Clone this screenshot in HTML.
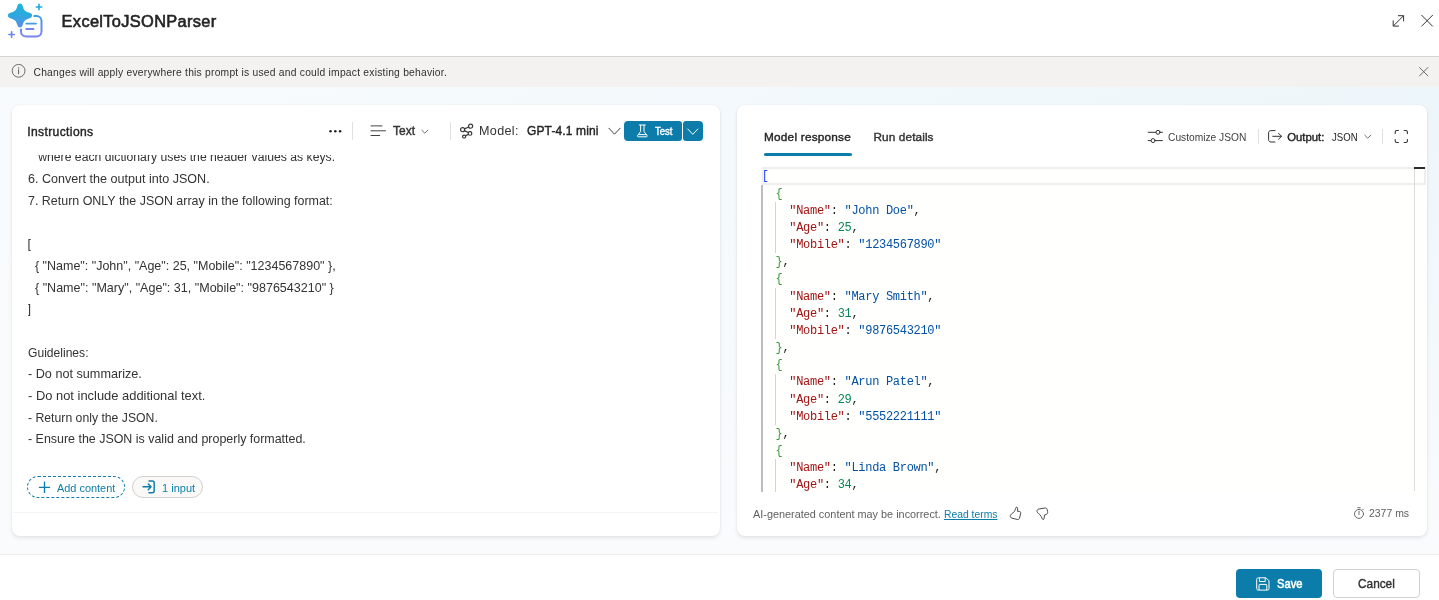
<!DOCTYPE html>
<html>
<head>
<meta charset="utf-8">
<title>ExcelToJSONParser</title>
<style>
*{box-sizing:border-box;margin:0;padding:0}
html,body{width:1439px;height:600px;overflow:hidden;background:#fff}
body{font-family:"Liberation Sans",sans-serif;color:#242424;position:relative;font-size:12.5px}
.abs{position:absolute}
.t{position:absolute;white-space:pre;line-height:1}
.b{font-weight:400;-webkit-text-stroke-width:0.4px;transform-origin:0 50%}
.t{transform-origin:0 50%}
/* header */
#hdr{position:absolute;left:0;top:0;width:1439px;height:57px;background:#fff;border-bottom:1px solid #d4d4d4}
#title{left:61.6px;top:13px;font-size:16.4px;letter-spacing:0.33px;font-weight:400;-webkit-text-stroke-width:0.6px;color:#242424}
/* info bar */
#info{position:absolute;left:0;top:57px;width:1439px;height:30px;background:#f3f2f1}
#infotxt{left:33.5px;top:67.9px;font-size:10.3px;letter-spacing:0.225px;color:#323130}
/* main */
#main{position:absolute;left:0;top:87px;width:1439px;height:467px;background:linear-gradient(180deg,rgba(249,250,252,0) 0%,rgba(250,251,253,.35) 40%,#fafbfd 100%),linear-gradient(90deg,#f8fbfd 0%,#f3f9fc 50%,#edf6fa 100%)}
#footline{position:absolute;left:0;top:554px;width:1439px;height:1px;background:#eeeeee}
.card{position:absolute;background:#fff;border-radius:8px;box-shadow:0 0 2px rgba(0,0,0,.05),0 2px 4px rgba(0,0,0,.09)}
#lcard{left:11.5px;top:105px;width:708px;height:430.5px}
#rcard{left:737px;top:105px;width:690px;height:430.5px}
.vdiv{position:absolute;width:1px;background:#e0e0e0}
.brand{color:#0c7dab}
/* left body */
#lbody{position:absolute;left:27.5px;top:155px;width:680px;height:310px;overflow:hidden}
#lbody .ln{position:absolute;left:0;white-space:pre;font-size:12.7px;line-height:21.7px;height:21.7px;color:#333;transform-origin:0 50%}
/* editor */
#ed{position:absolute;left:761px;top:167px;width:664.5px;height:324.5px;background:#fffffe;overflow:hidden}
#ed .ln{position:absolute;left:0.7px;margin-top:1.5px;white-space:pre;font-family:"Liberation Mono",monospace;font-size:12px;letter-spacing:-0.3px;line-height:17.17px;height:17.17px;color:#222}
.k{color:#a31515}.s{color:#0451a5}.n{color:#098658}.b1{color:#2047f7}.b2{color:#3d983d}
.g{position:absolute;width:1px;background:#d3d3d3}
.btn{position:absolute;border-radius:4px}
</style>
</head>
<body>
<div id="root" style="position:absolute;left:0;top:0;width:1439px;height:600px;will-change:transform">
<!-- HEADER -->
<div id="hdr"></div>
<svg class="abs" style="left:0;top:0" width="50" height="42" viewBox="0 0 50 42">
  <defs>
    <linearGradient id="gs" x1="0" y1="0" x2="0" y2="1"><stop offset="0" stop-color="#1fb4de"/><stop offset=".45" stop-color="#2aaade"/><stop offset="1" stop-color="#5b8bea"/></linearGradient>
    <linearGradient id="gd" x1="0" y1="0" x2="0" y2="1"><stop offset="0" stop-color="#3f9be8"/><stop offset="1" stop-color="#7b83f0"/></linearGradient>
  </defs>
  <!-- doc -->
  <rect x="21" y="16" width="20.5" height="20.5" rx="5" fill="none" stroke="url(#gd)" stroke-width="2"/>
  <path d="M26.3 23.6H36M26.3 29H33.5" stroke="url(#gd)" stroke-width="1.9" stroke-linecap="round" fill="none"/>
  <!-- star with white halo -->
  <path id="star" d="M20 3.4c1.6 0 2.3 1.2 2.8 3 .9 3.4 2.3 5 6.2 6.200 1.700.5 3.100 1.200 3.100 2.900s-1.400 2.400-3.100 2.900c-3.900 1.200-5.300 2.800-6.200 6.200-.5 1.800-1.200 3-2.800 3s-2.300-1.200-2.800-3c-.9-3.400-2.300-5-6.200-6.200-1.700-.5-3.100-1.200-3.100-2.900s1.400-2.400 3.100-2.900c3.900-1.200 5.300-2.800 6.200-6.200.5-1.800 1.200-3 2.800-3z" fill="url(#gs)" stroke="#fff" stroke-width="3" paint-order="stroke"/>
  <!-- plus signs -->
  <path d="M39 4.300v5.400M36.300 7h5.400" stroke="#1fa9e0" stroke-width="1.600" stroke-linecap="round"/>
  <path d="M11.600 31.800v5.400M8.900 34.500h5.400" stroke="#6a86ee" stroke-width="1.600" stroke-linecap="round"/>
</svg>
<div class="t" id="title">ExcelToJSONParser</div>
<!-- expand / close icons -->
<svg class="abs" style="left:1390px;top:12px" width="48" height="18" viewBox="0 0 48 18">
  <g fill="none" stroke="#333" stroke-width="1" stroke-linecap="round" stroke-linejoin="round">
    <path d="M3.500 13.800L13.300 4M8.300 3.700h5.300v5.300M3.200 8.800v5.300h5.300"/>
    <path d="M31.700 3.300l10.800 10.800M42.500 3.300L31.700 14.100"/>
  </g>
</svg>

<!-- INFO BAR -->
<div id="info"></div>
<svg class="abs" style="left:10px;top:62px" width="18" height="18" viewBox="0 0 18 18">
  <circle cx="8.600" cy="8.800" r="6.400" fill="none" stroke="#605e5c" stroke-width="0.900"/>
  <circle cx="8.600" cy="5.900" r="0.700" fill="#605e5c"/>
  <path d="M8.600 7.800v4" stroke="#605e5c" stroke-width="1" stroke-linecap="round"/>
</svg>
<div class="t" id="infotxt">Changes will apply everywhere this prompt is used and could impact existing behavior.</div>
<svg class="abs" style="left:1418px;top:65.700px" width="12" height="12" viewBox="0 0 12 12"><path d="M1.500 1.500l8.400 8.400M9.900 1.500L1.500 9.900" stroke="#605e5c" stroke-width="0.900" stroke-linecap="round"/></svg>

<!-- MAIN -->
<div id="main"></div>
<div id="footline"></div>
<div class="card" id="lcard"></div>
<div class="card" id="rcard"></div>

<!-- LEFT CARD TOOLBAR -->
<div class="t b" style="left:27.3px;top:125.600px;font-size:12.100px;letter-spacing:0.36px;color:#242424">Instructions</div>
<svg class="abs" style="left:328px;top:128px" width="16" height="6" viewBox="0 0 16 6"><g fill="#242424"><circle cx="2.500" cy="3.200" r="1.250"/><circle cx="7.300" cy="3.200" r="1.250"/><circle cx="12.100" cy="3.200" r="1.250"/></g></svg>
<div class="vdiv" style="left:352px;top:122px;height:18px"></div>
<svg class="abs" style="left:369px;top:122px" width="20" height="18" viewBox="0 0 20 18"><path d="M2 3.900h11M2 8.800h14.500M2 13.500h8.700" stroke="#424242" stroke-width="1" stroke-linecap="round" fill="none"/></svg>
<div class="t b" style="left:393px;top:125.400px;font-size:12px;color:#333">Text</div>
<svg class="abs" style="left:420px;top:128px" width="10" height="8" viewBox="0 0 10 8"><path d="M1.800 2.200l3 3 3-3" stroke="#616161" stroke-width="0.900" fill="none" stroke-linecap="round" stroke-linejoin="round"/></svg>
<div class="vdiv" style="left:450px;top:122px;height:18px"></div>
<svg class="abs" style="left:458px;top:122px" width="18" height="18" viewBox="0 0 18 18">
  <g fill="none" stroke="#383838" stroke-width="1.2">
    <circle cx="4.600" cy="7.700" r="2.050"/><circle cx="12.600" cy="4.200" r="2.050"/><circle cx="12" cy="11.400" r="1.850"/><circle cx="6.100" cy="14.600" r="1.550"/>
    <path d="M6.500 6.900l4.200-1.900M6.400 8.600l3.900 1.900M10.400 12.300l-2.900 1.600"/>
  </g>
</svg>
<div class="t" style="left:479px;top:125.300px;font-size:12.600px;letter-spacing:0.33px;color:#333">Model:</div>
<div class="t b" style="left:527px;top:125.400px;font-size:12px;letter-spacing:0.13px;color:#242424">GPT-4.1 mini</div>
<svg class="abs" style="left:607px;top:126px" width="15" height="10" viewBox="0 0 15 10"><path d="M1.900 2.200l5.600 6 5.600-6" stroke="#424242" stroke-width="1" fill="none" stroke-linecap="round" stroke-linejoin="round"/></svg>
<div class="btn" style="left:624.200px;top:120.800px;width:57.600px;height:20.200px;background:#0c7dab;border-radius:4px 3px 3px 4px"></div>
<div class="btn" style="left:683px;top:120.800px;width:19.600px;height:20.200px;background:#0c7dab;border-radius:3px 4px 4px 3px"></div>
<svg class="abs" style="left:634px;top:122px" width="16" height="17" viewBox="0 0 16 17"><path d="M5.300 3h6M6.600 3.200v6.300L3.500 13.600c-.4.600 0 1.200.7 1.200h8.200c.7 0 1.100-.6.700-1.200L10 9.500V3.200M4.600 12.600h7.400" stroke="#fff" stroke-width="1" fill="none" stroke-linecap="round" stroke-linejoin="round"/></svg>
<div class="t b" style="left:655px;top:126.300px;font-size:11.500px;transform:scaleX(.83);color:#fff">Test</div>
<svg class="abs" style="left:685px;top:126px" width="16" height="10" viewBox="0 0 16 10"><path d="M2.800 3l5 5.300 5-5.300" stroke="#fff" stroke-width="1" fill="none" stroke-linecap="round" stroke-linejoin="round"/></svg>

<!-- LEFT BODY -->
<div id="lbody">
  <div class="ln" style="top:-7.7px;transform:scaleX(0.9633)">   where each dictionary uses the header values as keys.</div>
  <div class="ln" style="top:14.0px;transform:scaleX(0.9907)">6. Convert the output into JSON.</div>
  <div class="ln" style="top:35.7px;transform:scaleX(0.9816)">7. Return ONLY the JSON array in the following format:</div>
  <div class="ln" style="top:79.1px">[</div>
  <div class="ln" style="top:100.8px;transform:scaleX(0.9849)">  { "Name": "John", "Age": 25, "Mobile": "1234567890" },</div>
  <div class="ln" style="top:122.5px;transform:scaleX(0.9880)">  { "Name": "Mary", "Age": 31, "Mobile": "9876543210" }</div>
  <div class="ln" style="top:144.2px">]</div>
  <div class="ln" style="top:187.6px;transform:scaleX(0.9530)">Guidelines:</div>
  <div class="ln" style="top:209.3px;transform:scaleX(0.9970)">- Do not summarize.</div>
  <div class="ln" style="top:231.0px;transform:scaleX(1.0180)">- Do not include additional text.</div>
  <div class="ln" style="top:252.7px;transform:scaleX(0.9640)">- Return only the JSON.</div>
  <div class="ln" style="top:274.4px;transform:scaleX(0.9800)">- Ensure the JSON is valid and properly formatted.</div>
</div>

<!-- pills -->
<div class="abs" style="left:26.700px;top:475.800px;width:98.300px;height:22.200px;border:1px dashed #0c7dab;border-radius:11.100px;background:#fff"></div>
<svg class="abs" style="left:38px;top:481px" width="13" height="13" viewBox="0 0 13 13"><path d="M6.500 1.200v10.200M1.400 6.300h10.200" stroke="#0c7dab" stroke-width="1.350" stroke-linecap="round"/></svg>
<div class="t brand" style="left:57.200px;top:482.100px;font-size:11.600px;transform:scaleX(.942)">Add content</div>
<div class="abs" style="left:132px;top:475.800px;width:70.800px;height:22.200px;border:1px solid #d1d1d1;border-radius:11.100px;background:#faf9f8"></div>
<svg class="abs" style="left:141px;top:479px" width="16" height="16" viewBox="0 0 16 16"><path d="M2 7.800h8M7.200 4.900l2.900 2.900-2.900 2.900M8 1.900h3.200c1.200 0 2 .8 2 2v7.800c0 1.200-.8 2-2 2H8" stroke="#0c7dab" stroke-width="1.450" fill="none" stroke-linecap="round" stroke-linejoin="round"/></svg>
<div class="t brand" style="left:162.300px;top:482.100px;font-size:11.600px;transform:scaleX(.95)">1 input</div>
<div class="abs" style="left:13px;top:512.300px;width:705px;height:1px;background:#f4f4f4"></div>

<!-- RIGHT CARD HEADER -->
<div class="t b" style="left:764px;top:131.800px;font-size:11.800px;letter-spacing:0.22px;color:#242424">Model response</div>
<div class="abs" style="left:763.500px;top:153.200px;width:88.200px;height:3px;border-radius:1.500px;background:#0c7dab"></div>
<div class="t b" style="left:873.500px;top:131.800px;font-size:11.800px;letter-spacing:0.1px;color:#333">Run details</div>

<svg class="abs" style="left:1146px;top:128px" width="18" height="17" viewBox="0 0 18 17"><g fill="none" stroke="#333" stroke-width="1" stroke-linecap="round"><path d="M2.200 4.300h7.600M14.200 4.300h2.200M2.200 12.600h2.700M9.300 12.600h7.100"/><circle cx="12" cy="4.300" r="2"/><circle cx="7.100" cy="12.600" r="2"/></g></svg>
<div class="t" style="left:1168.300px;top:132px;font-size:11.300px;transform:scaleX(.904);color:#424242">Customize JSON</div>
<div class="vdiv" style="left:1258.300px;top:129px;height:14.500px"></div>
<svg class="abs" style="left:1266px;top:128px" width="18" height="17" viewBox="0 0 18 17"><path d="M9 2.600H4.900c-1.400 0-2.300.9-2.300 2.300v6.800c0 1.400.9 2.300 2.300 2.300H9M6.700 8.300h8.700M12.500 5.300l3 3-3 3" stroke="#333" stroke-width="1" fill="none" stroke-linecap="round" stroke-linejoin="round"/></svg>
<div class="t b" style="left:1287.300px;top:132px;font-size:11.300px;color:#242424">Output:</div>
<div class="t" style="left:1331.500px;top:132px;font-size:11.300px;transform:scaleX(.85);color:#242424">JSON</div>
<svg class="abs" style="left:1363px;top:133px" width="10" height="8" viewBox="0 0 10 8"><path d="M1.800 2.200l3 3 3-3" stroke="#616161" stroke-width="0.900" fill="none" stroke-linecap="round" stroke-linejoin="round"/></svg>
<div class="vdiv" style="left:1382px;top:129px;height:14.500px"></div>
<svg class="abs" style="left:1393px;top:128px" width="18" height="17" viewBox="0 0 18 17"><path d="M2.200 5.500V4c0-.9.600-1.500 1.500-1.500h1.700M11.200 2.500h1.700c.9 0 1.500.6 1.500 1.500v1.500M14.400 11.500V13c0 .9-.6 1.500-1.500 1.500h-1.700M5.400 14.500H3.700c-.9 0-1.500-.6-1.500-1.500v-1.500" stroke="#333" stroke-width="1.100" fill="none" stroke-linecap="round"/></svg>

<!-- EDITOR -->
<div id="ed">
  <div class="abs" style="left:1px;top:0;width:663.500px;height:17.5px;border:2px solid #eee"></div>
  <div class="g" style="left:0;top:17.5px;width:2px;height:310px;background:#bdbdbd"></div>
  <div class="g" style="left:14px;top:34.84px;height:51.51px"></div>
  <div class="g" style="left:14px;top:120.69px;height:51.51px"></div>
  <div class="g" style="left:14px;top:206.54px;height:51.51px"></div>
  <div class="g" style="left:14px;top:292.39px;height:51.51px"></div>
  <div class="ln" style="top:-0.14px"><span class="b1">[</span></div>
  <div class="ln" style="top:17.03px">  <span class="b2">{</span></div>
  <div class="ln" style="top:34.20px">    <span class="k">"Name"</span>: <span class="s">"John Doe"</span>,</div>
  <div class="ln" style="top:51.37px">    <span class="k">"Age"</span>: <span class="n">25</span>,</div>
  <div class="ln" style="top:68.54px">    <span class="k">"Mobile"</span>: <span class="s">"1234567890"</span></div>
  <div class="ln" style="top:85.71px">  <span class="b2">}</span>,</div>
  <div class="ln" style="top:102.88px">  <span class="b2">{</span></div>
  <div class="ln" style="top:120.05px">    <span class="k">"Name"</span>: <span class="s">"Mary Smith"</span>,</div>
  <div class="ln" style="top:137.22px">    <span class="k">"Age"</span>: <span class="n">31</span>,</div>
  <div class="ln" style="top:154.39px">    <span class="k">"Mobile"</span>: <span class="s">"9876543210"</span></div>
  <div class="ln" style="top:171.56px">  <span class="b2">}</span>,</div>
  <div class="ln" style="top:188.73px">  <span class="b2">{</span></div>
  <div class="ln" style="top:205.90px">    <span class="k">"Name"</span>: <span class="s">"Arun Patel"</span>,</div>
  <div class="ln" style="top:223.07px">    <span class="k">"Age"</span>: <span class="n">29</span>,</div>
  <div class="ln" style="top:240.24px">    <span class="k">"Mobile"</span>: <span class="s">"5552221111"</span></div>
  <div class="ln" style="top:257.41px">  <span class="b2">}</span>,</div>
  <div class="ln" style="top:274.58px">  <span class="b2">{</span></div>
  <div class="ln" style="top:291.75px">    <span class="k">"Name"</span>: <span class="s">"Linda Brown"</span>,</div>
  <div class="ln" style="top:308.92px">    <span class="k">"Age"</span>: <span class="n">34</span>,</div>
  <!-- scrollbar / overview ruler -->
  <div class="abs" style="left:652.5px;top:0;width:1px;height:324px;background:#dcdcdc"></div>
</div>
<div class="abs" style="left:1413.600px;top:166.800px;width:11.800px;height:2px;background:#2b2b2b"></div>

<!-- RIGHT FOOTER -->
<div class="t" style="left:752.800px;top:508.900px;font-size:11px;transform:scaleX(.988);color:#616161">AI-generated content may be incorrect.</div>
<div class="t brand" style="left:943.800px;top:508.900px;font-size:11px;transform:scaleX(.94);text-decoration:underline">Read terms</div>
<svg class="abs" style="left:1008px;top:505px" width="16" height="16" viewBox="0 0 16 16"><path d="M9.600 3.900v2.500h1.700c1 0 1.600.8 1.400 1.800l-1.200 5c-.3 1-1.100 1.500-2.100 1.300l-5.800-1.500c-1.100-.3-1.700-1.400-1.300-2.400.4-1.100 1.400-1.800 2.500-2.600 1.300-1 2-2 2.600-3.700l.3-1.100c.2-.7.6-1.100 1.100-1.100.5 0 .8.500.8 1.800z" stroke="#424242" stroke-width="0.950" fill="none" stroke-linejoin="round"/></svg>
<svg class="abs" style="left:1034px;top:506px" width="16" height="16" viewBox="0 0 16 16"><path d="M4.500 3.100L10.900 2C12.100 1.800 12.900 2.400 13.200 3.500L13.600 5.600C13.900 7 13.400 8.100 12.200 8.500L10.400 9C10.500 10.600 10.300 11.900 9.900 13C9.600 13.800 8.800 13.800 8.400 13C7.600 11.200 6.900 9.700 5.800 8.600C5 7.800 4.100 7.300 3.500 6.600C2.600 5.500 3 3.400 4.500 3.100Z" stroke="#424242" stroke-width="0.950" fill="none" stroke-linejoin="round"/></svg>
<svg class="abs" style="left:1352px;top:505px" width="15" height="16" viewBox="0 0 15 16"><g fill="none" stroke="#616161" stroke-width="0.950" stroke-linecap="round"><circle cx="7" cy="8.900" r="4.500"/><path d="M7 6.200v3.200M5.800 2.700h2.400M10.700 4.800l.7-.7"/></g></svg>
<div class="t" style="left:1368.800px;top:508px;font-size:11px;transform:scaleX(.95);color:#616161">2377 ms</div>

<!-- FOOTER BUTTONS -->
<div class="btn" style="left:1236px;top:569px;width:86.300px;height:28.800px;background:#0c7dab"></div>
<svg class="abs" style="left:1255px;top:576px" width="16" height="16" viewBox="0 0 16 16"><path d="M3.300 1.800h7.700l3 3v7.700c0 1-.6 1.600-1.600 1.600H3.300c-1 0-1.600-.6-1.600-1.600V3.400c0-1 .6-1.600 1.600-1.600zM4.500 2v3.500h5.700V2M4 14v-4.800c0-.5.300-.8.800-.8h6.200c.5 0 .8.300.8.800V14" stroke="#fff" stroke-width="1" fill="none" stroke-linejoin="round"/></svg>
<div class="t b" style="left:1277.200px;top:578.100px;font-size:12.400px;-webkit-text-stroke-width:.55px;transform:scaleX(.9);color:#fff">Save</div>
<div class="btn" style="left:1333.400px;top:569px;width:86.300px;height:28.800px;background:#fff;border:1px solid #d1d1d1"></div>
<div class="t b" style="left:1357.500px;top:578.100px;font-size:12.400px;transform:scaleX(.955);color:#333">Cancel</div>
</div>
</body>
</html>
